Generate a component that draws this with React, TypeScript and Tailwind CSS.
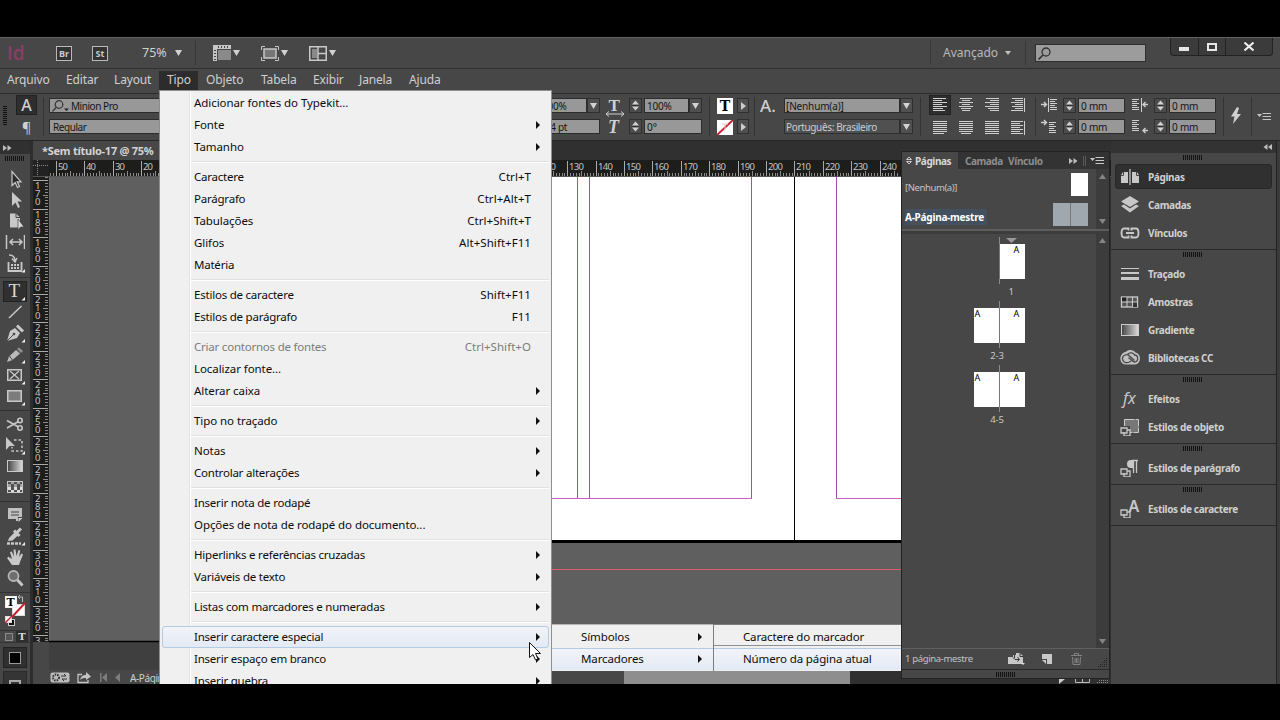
import React from 'react';

type MenuEntry = { label: string; shortcut?: string; sub?: boolean; disabled?: boolean; active?: boolean; tight?: boolean } | null;

const menuBar = [
  { label: 'Arquivo', cell: 'w-[58px]' },
  { label: 'Editar', cell: 'w-[48px]' },
  { label: 'Layout', cell: 'w-[53px]' },
  { label: 'Tipo', cell: 'w-[39px]' },
  { label: 'Objeto', cell: 'w-[55px]' },
  { label: 'Tabela', cell: 'w-[52px]' },
  { label: 'Exibir', cell: 'w-[46px]' },
  { label: 'Janela', cell: 'w-[50px]' },
  { label: 'Ajuda', cell: 'w-[50px]' },
];

// null = separator
const typeMenu: MenuEntry[] = [
  { label: 'Adicionar fontes do Typekit...' },
  { label: 'Fonte', sub: true },
  { label: 'Tamanho', sub: true },
  null,
  { label: 'Caractere', shortcut: 'Ctrl+T', tight: true },
  { label: 'Parágrafo', shortcut: 'Ctrl+Alt+T', tight: true },
  { label: 'Tabulações', shortcut: 'Ctrl+Shift+T' },
  { label: 'Glifos', shortcut: 'Alt+Shift+F11' },
  { label: 'Matéria', tight: true },
  null,
  { label: 'Estilos de caractere', shortcut: 'Shift+F11', tight: true },
  { label: 'Estilos de parágrafo', shortcut: 'F11', tight: true },
  null,
  { label: 'Criar contornos de fontes', shortcut: 'Ctrl+Shift+O', disabled: true, tight: true },
  { label: 'Localizar fonte...' },
  { label: 'Alterar caixa', sub: true },
  null,
  { label: 'Tipo no traçado', sub: true },
  null,
  { label: 'Notas', sub: true },
  { label: 'Controlar alterações', sub: true, tight: true },
  null,
  { label: 'Inserir nota de rodapé', tight: true },
  { label: 'Opções de nota de rodapé do documento...' },
  null,
  { label: 'Hiperlinks e referências cruzadas', sub: true, tight: true },
  { label: 'Variáveis de texto', sub: true, tight: true },
  null,
  { label: 'Listas com marcadores e numeradas', sub: true, tight: true },
  null,
  { label: 'Inserir caractere especial', sub: true, active: true, tight: true },
  { label: 'Inserir espaço em branco', sub: true, tight: true },
  { label: 'Inserir quebra', sub: true, tight: true },
];

const MM = 2.84;

function Down({ className = '' }: { className?: string }) {
  return (
    <svg width="7" height="6" className={className}>
      <path d="M0 0h7L3.500 6z" fill="#d2d2d2" />
    </svg>
  );
}

function Grip() {
  return (
    <svg width="20" height="5">
      {Array.from({ length: 10 }, (_, i) => (
        <rect key={i} x={i * 2} width="1" height="5" fill="#111" />
      ))}
    </svg>
  );
}

function Chevrons({ left = false }: { left?: boolean }) {
  return (
    <svg width="9" height="6" className={left ? 'rotate-180' : ''}>
      <path d="M0 0l4 3-4 3zM4.500 0l4 3-4 3z" fill="#bdbdbd" />
    </svg>
  );
}

function PanelMenu() {
  return (
    <svg width="14" height="9" className="shrink-0">
      <path d="M0 2h5L2.500 5z" fill="#c8c8c8" />
      <path d="M5.500 1.500H14M5.500 4.500H14M5.500 7.500H14" stroke="#c8c8c8" />
    </svg>
  );
}

function TitleBar() {
  return (
    <div className="flex h-[32px] items-center border-t border-b border-t-[#626262] border-b-[#303030] bg-[#474747]">
      <span className="w-[56px] pl-[7px] font-['Open_Sans',sans-serif] text-[19px] leading-none font-semibold text-[#8c3c66]">Id</span>
      {['Br', 'St'].map((t) => (
        <span key={t} className="mr-[20px] flex h-[15px] w-[16px] items-center justify-center border border-[#b9b9b9] bg-[#333] text-[9px] leading-none font-bold text-[#c9c9c9]">
          {t}
        </span>
      ))}
      <span className="ml-[14px] w-[33px] text-[12.500px] text-[#cfcfcf]">75%</span>
      <Down />
      <span className="mr-[17px] ml-[13px] h-[24px] w-px bg-[#373737]" />
      <svg width="18" height="16">
        <rect x="5" y="5" width="13" height="10" fill="#8a8a8a" />
        <rect width="18" height="4" fill="#c6c6c6" />
        <rect width="4" height="16" fill="#c6c6c6" />
        <path d="M5.500 1v2M8.500 1v2M11.500 1v2M14.500 1v2M1 5.500h2M1 8.500h2M1 11.500h2M1 14.500h2" stroke="#444" />
      </svg>
      <Down className="mr-[21px] ml-[2px]" />
      <svg width="18" height="15" fill="none" stroke="#c6c6c6">
        <rect x="3" y="3" width="12" height="9" fill="#777" strokeWidth="1.500" />
        <path d="M.5 4V.5H4M14 .5h3.500V4M17.500 11v3.500H14M4 14.500H.5V11" />
      </svg>
      <Down className="mr-[21px] ml-[2px]" />
      <svg width="18" height="15" stroke="#c9c9c9" strokeWidth="1.500">
        <rect x=".75" y=".75" width="16.500" height="13.500" fill="none" />
        <rect x="3" y="3" width="5" height="9" fill="#888" stroke="none" />
        <path d="M9 1v13M9 7.500h8" />
      </svg>
      <Down className="ml-[2px]" />
      <div className="ml-auto flex items-center self-stretch">
        <span className="mr-[12px] h-[24px] w-px bg-[#373737]" />
        <span className="w-[62px] text-[12px] text-[#b9b9b9]">Avançado</span>
        <svg width="6" height="4"><path d="M0 0h6L3 4z" fill="#c2c2c2" /></svg>
        <span className="mr-[9px] ml-[14px] h-[24px] w-px bg-[#373737]" />
        <div className="flex h-[18px] w-[111px] items-center border border-[#2f2f2f] bg-[#9c9c9c] pl-[2px]">
          <svg width="13" height="13" fill="none" stroke="#333" strokeWidth="1.300">
            <circle cx="8" cy="5" r="4" />
            <path d="M5 8L.5 12.500" strokeWidth="1.600" />
          </svg>
        </div>
        <div className="ml-[24px] mr-[7px] flex h-[18px] self-start rounded-b-[4px] border border-t-0 border-[#222] bg-[#3b3b3b]">
          <div className="w-[28px] border-r border-[#222] pt-[9px] pl-[8px]"><div className="h-[4px] w-[10px] bg-[#e6e6e6]" /></div>
          <div className="w-[27px] border-r border-[#222] pt-[5px] pl-[8px]"><div className="h-[8px] w-[10px] border-2 border-[#e6e6e6]" /></div>
          <div className="flex w-[46px] items-center justify-center">
            <svg width="10" height="9" stroke="#eee" strokeWidth="2"><path d="M.5.5l9 8M9.500.5l-9 8" /></svg>
          </div>
        </div>
      </div>
    </div>
  );
}

function Field({ value, className }: { value: string; className: string }) {
  return (
    <div className={`flex h-[15px] items-center overflow-hidden border border-[#2c2c2c] bg-[#989898] text-[10px] leading-none whitespace-nowrap text-[#151515] ${className}`}>
      {value}
    </div>
  );
}

function DropButton() {
  return (
    <div className="flex h-[15px] w-[13px] items-center justify-center border border-[#2f2f2f] bg-[#505050]">
      <Down />
    </div>
  );
}

function PlayButton() {
  return (
    <div className="flex h-[15px] w-[12px] items-center justify-center border border-[#2f2f2f] bg-[#505050]">
      <svg width="5" height="8"><path d="M0 0l5 4-5 4z" fill="#ccc" /></svg>
    </div>
  );
}

function Spinner() {
  return (
    <div className="flex h-[15px] w-[13px] items-center justify-center border border-[#2f2f2f] bg-[#4c4c4c]">
      <svg width="7" height="11">
        <path d="M0 4.500h7L3.500.5zM0 6.500h7l-3.500 4z" fill="#d2d2d2" />
        <path d="M-2 5.500h11" stroke="#2f2f2f" />
      </svg>
    </div>
  );
}

function Rule({ className }: { className: string }) {
  return <div className={`h-[39px] w-px shrink-0 bg-[#343434] ${className}`} />;
}

function Stack({ className = '', children }: { className?: string; children: React.ReactNode }) {
  return <div className={`flex shrink-0 flex-col gap-[6px] ${className}`}>{children}</div>;
}

// each entry: [start, end] of the seven lines
const alignments: [number, number][][] = [
  [[0, 13], [0, 9], [0, 14], [0, 9], [0, 14], [0, 10], [0, 12]],
  [[1, 13], [3, 11], [0, 14], [3, 11], [0, 14], [2, 12], [3, 11]],
  [[1, 14], [5, 14], [0, 14], [5, 14], [0, 14], [3, 14], [5, 14]],
  [[1, 12], [4, 12], [0, 12], [4, 12], [1, 12], [4, 12], [0, 12]],
  [[0, 14], [0, 14], [0, 14], [0, 14], [0, 14], [0, 14], [0, 11]],
  [[0, 14], [0, 14], [0, 14], [0, 14], [0, 14], [0, 14], [2, 12]],
  [[0, 14], [0, 14], [0, 14], [0, 14], [0, 14], [0, 14], [0, 14]],
  [[0, 12], [0, 9], [0, 12], [0, 9], [0, 12], [0, 9], [0, 12]],
];

function AlignIcon({ index }: { index: number }) {
  return (
    <div className={`flex h-[20px] w-[22px] items-center justify-center ${index === 0 ? 'border border-[#222] bg-[#2e2e2e]' : ''}`}>
      <svg width="15" height="14" stroke="#cfcfcf">
        {alignments[index].map(([a, b], i) => (
          <path key={i} d={`M${a} ${i * 2 + 0.5}H${b}`} />
        ))}
        {index % 4 === 3 && <path d="M13.500 0v14" />}
      </svg>
    </div>
  );
}

function IndentIcon({ kind }: { kind: number }) {
  const right = kind % 2 === 1;
  const low = kind > 1;
  return (
    <svg width="17" height="15" stroke="#cfcfcf" fill="none">
      {right ? (
        <>
          <path d="M0 1.500h7M0 3.500h5M0 5.500h7M0 7.500h5M0 9.500h7M0 11.500h7" />
          {!low && <path d="M9.500 0v14" />}
          <path strokeWidth="1.400" d={low ? 'M11 11.500h5M13.500 9l-2.500 2.500 2.500 2.500' : 'M11 6.500h5M13.500 4l-2.500 2.500 2.500 2.500'} />
        </>
      ) : (
        <>
          <path strokeWidth="1.400" d={low ? 'M0 3.500h5M3 1l2.500 2.500L3 6' : 'M0 6.500h5M3 4l2.500 2.500L3 9'} />
          {!low && <path d="M7.500 0v14" />}
          <path d="M9 1.500h7M9 3.500h5M9 5.500h7M9 7.500h5M9 9.500h7M9 11.500h7" transform={low ? 'translate(-1 2)' : undefined} />
        </>
      )}
    </svg>
  );
}

function ControlBar() {
  return (
    <div className="flex h-[47px] items-center overflow-hidden border-b border-[#262626] bg-[#474747] pb-[2px]">
      <svg width="16" height="20" className="shrink-0">
        {Array.from({ length: 10 }, (_, i) => (
          <rect key={i} x="3" y={i * 2} width="4" height="1" fill="#111" />
        ))}
      </svg>
      <div className="flex w-[21px] shrink-0 flex-col items-center gap-[4px] text-[#d0d0d0]">
        <span className="flex h-[20px] w-[21px] items-center justify-center border border-[#222] bg-[#2e2e2e] text-[16px] leading-none font-medium">A</span>
        <span className="h-[18px] text-[14px] leading-[18px]">¶</span>
      </div>
      <Rule className="ml-[6px] mr-[5px]" />
      <Stack className="w-[400px]">
        <div className="flex h-[15px] items-center border border-[#2c2c2c] bg-[#989898] pl-[2px] text-[10px] leading-none text-[#151515]">
          <svg width="20" height="12" fill="none" stroke="#333" strokeWidth="1.200" className="-mr-px">
            <circle cx="7" cy="4.500" r="3.800" />
            <path d="M4 7.500L.5 11.500" />
            <path d="M12 8.500h5l-2.500 2.500z" fill="#222" stroke="none" />
          </svg>
          <span className="tracking-[-0.45px]">Minion Pro</span>
        </div>
        <Field value="Regular" className="w-full pl-[3px] tracking-[-0.45px]" />
      </Stack>
      <Stack className="ml-[87px] w-[64px]">
        <div className="flex">
          <Field value="100%" className="w-[51px] pl-[5px] tracking-[-0.2px]" />
          <DropButton />
        </div>
        <Field value="14,4 pt" className="w-full justify-start tracking-[-0.3px]" />
      </Stack>
      <svg width="18" height="39" className="ml-[6px] shrink-0 font-['Liberation_Serif',serif]" fill="#cfcfcf">
        <text x="2.500" y="14" fontSize="17" fontWeight="bold">T</text>
        <path d="M0 17h18M3 14.500l-3 2.500 3 2.500M15 14.500l3 2.500-3 2.500" fill="none" stroke="#cfcfcf" />
        <text x="2" y="36" fontSize="18" fontStyle="italic" fontWeight="bold">T</text>
      </svg>
      <Stack className="ml-[5px]"><Spinner /><Spinner /></Stack>
      <Stack className="ml-[2px] w-[58px]">
        <div className="flex">
          <Field value="100%" className="w-[45px] pl-[2px] tracking-[-0.2px]" />
          <DropButton />
        </div>
        <Field value="0°" className="w-full pl-[2px]" />
      </Stack>
      <Rule className="ml-[7px]" />
      <Stack className="ml-[7px]">
        <div className="flex h-[16px] w-[16px] items-center justify-center bg-white font-['DejaVu_Serif',serif] text-[14px] leading-none font-bold text-black">T</div>
        <svg width="16" height="15" className="bg-white">
          <path d="M0 15L16 0" stroke="#c8202c" strokeWidth="2" />
          <path d="M5 4h6M8 4v7" stroke="#e4c9c9" />
        </svg>
      </Stack>
      <Stack className="ml-[4px]"><PlayButton /><PlayButton /></Stack>
      <Rule className="ml-[5px]" />
      <span className="ml-[5px] w-[24px] shrink-0 self-start pt-[2px] text-[17px] leading-[20px] font-medium text-[#cfcfcf]">A.</span>
      <Stack className="w-[129px]">
        <div className="flex">
          <Field value="[Nenhum(a)]" className="w-[117px] pl-px tracking-[-0.15px]" />
          <DropButton />
        </div>
        <div className="flex">
          <div className="flex h-[15px] w-[117px] items-center border border-[#2f2f2f] bg-[#505050] pl-px text-[10px] leading-none tracking-[-0.35px] whitespace-nowrap text-[#cdcdcd]">Português: Brasileiro</div>
          <DropButton />
        </div>
      </Stack>
      <Rule className="ml-[7px]" />
      <div className="ml-[8px] grid shrink-0 grid-cols-4 gap-x-[4px] gap-y-[3px]">
        {alignments.map((_, i) => <AlignIcon key={i} index={i} />)}
      </div>
      <Rule className="ml-[6px]" />
      <Stack className="ml-[5px]"><IndentIcon kind={0} /><IndentIcon kind={2} /></Stack>
      <Stack className="ml-[5px]"><Spinner /><Spinner /></Stack>
      <Stack className="ml-[2px]"><Field value="0 mm" className="w-[47px] pl-[2px] tracking-[-0.2px]" /><Field value="0 mm" className="w-[47px] pl-[2px] tracking-[-0.2px]" /></Stack>
      <Stack className="ml-[7px]"><IndentIcon kind={1} /><IndentIcon kind={3} /></Stack>
      <Stack className="ml-[5px]"><Spinner /><Spinner /></Stack>
      <Stack className="ml-[2px]"><Field value="0 mm" className="w-[47px] pl-[2px] tracking-[-0.2px]" /><Field value="0 mm" className="w-[47px] pl-[2px] tracking-[-0.2px]" /></Stack>
      <Rule className="ml-[7px]" />
      <svg width="12" height="18" className="ml-[6px] shrink-0"><path d="M7 0L1 9.500h3.500L3 17l8-10H7L9 1z" fill="#cfcfcf" /></svg>
      <Rule className="ml-[9px] mr-[5px]" />
      <PanelMenu />
    </div>
  );
}

// tool glyphs, drawn in an 18x18 box
const tools: Record<string, React.ReactNode> = {
  select: <path d="M5 1.500v14l3.200-3 2.300 5 2-1-2.300-4.700H14z" fill="#2b2b2b" stroke="#c8c8c8" strokeWidth="1.200" />,
  direct: <path d="M5 1v14l3.500-3.500L11 17l2-1-2.500-5.500H15z" fill="#c8c8c8" />,
  page: <><path d="M3 1.500h6l4 4v10H3z" fill="#c8c8c8" /><path d="M9 1.500v4h4" stroke="#444" fill="none" /><path d="M11 7v11l2.500-3H17z" fill="#ddd" stroke="#444" strokeWidth=".7" /></>,
  gap: <path d="M-.500 2v14M17.500 2v14M3 9h12M6 6L3 9l3 3M12 6l3 3-3 3" stroke="#c8c8c8" strokeWidth="1.500" fill="none" />,
  collect: <><path d="M1.500 8v9h13V8" stroke="#c8c8c8" strokeWidth="1.800" fill="none" /><path d="M4 11h8M4 14h8" stroke="#c8c8c8" strokeWidth="2" strokeDasharray="2 1" /><path d="M2 1c4 0 6 2 6 6M5 4.500L8 8l2-4" stroke="#c8c8c8" strokeWidth="1.400" fill="none" /></>,
  type: <text x="1.500" y="15" fontSize="19" fontFamily="Liberation Serif, serif" fill="#d8d8d8">T</text>,
  line: <path d="M2 15L14.500 3" stroke="#c8c8c8" strokeWidth="1.500" />,
  pen: <><path d="M0 17l3-10 5-3 5 5-3 5z" fill="#c8c8c8" /><path d="M0 17l6.500-6.500" stroke="#444" /><circle cx="7" cy="10" r="1.300" fill="#444" /><path d="M10 1.500l6 6" stroke="#c8c8c8" strokeWidth="3" /></>,
  pencil: <><path d="M0 17l2-5.500L9 5l4 3.500-7.500 6.500z" fill="#bbb" /><path d="M10 4l2-1.500L16 6l-2 2z" fill="#8f8f8f" /><path d="M2.500 11l3 4" stroke="#444" /></>,
  frame: <><rect x=".75" y="3.750" width="13.500" height="10.500" fill="none" stroke="#c8c8c8" strokeWidth="1.500" /><path d="M3 5l9 8M12 5l-9 8" stroke="#c8c8c8" strokeWidth="1.300" /></>,
  rect: <rect x=".75" y="3.750" width="13.500" height="10.500" fill="#7c7c7c" stroke="#c8c8c8" strokeWidth="1.500" />,
  scissors: <g fill="none" stroke="#c8c8c8" strokeWidth="1.600"><circle cx="13" cy="5.500" r="2.200" /><circle cx="13" cy="13" r="2.200" /><path d="M0 5.500l11.500 6.500M0 13l11.500-6.500" /></g>,
  transform: <><path d="M-1 1v13l3.500-4H8z" fill="#c8c8c8" /><path d="M7 4h8v11H5v-4" fill="none" stroke="#c8c8c8" strokeWidth="1.500" strokeDasharray="2.500 2" /></>,
  gradient: <rect x=".5" y="3.500" width="15" height="11" fill="url(#toolGradient)" stroke="#c8c8c8" />,
  feather: (
    <>
      <rect x=".5" y="3.500" width="15" height="11" fill="#505050" stroke="#c8c8c8" />
      <path d="M1 6h3v-2h3v2h3v-2h3v2h2v3h-2v-3h-3v3h-3v-3h-3v3h-3z" fill="#a0a0a0" />
      <path d="M1 9h3v3H1zM7 9h3v3H7zM13 9h2v3h-2zM4 12h3v2H4zM10 12h3v2h-3z" fill="#ddd" />
    </>
  ),
  note: <><path d="M1 2h14v9h-4v4H9v-2H1z" fill="#c0c0c0" /><path d="M4 6h8M4 9h8" stroke="#444" strokeWidth="1.200" /><path d="M15.500 12l-4 4v-4z" fill="#ccc" /></>,
  eyedropper: <><path d="M2 11l6-6 3.500 3-6 5.500L1 14z" fill="#c8c8c8" /><path d="M7 3.500l5.500 5.500M10.500 5l3.500-3.500" stroke="#c8c8c8" strokeWidth="3" /><path d="M0 16.500h14" stroke="#c8c8c8" strokeWidth="2.500" strokeDasharray="3 1" /></>,
  hand: <path d="M5 17L0 10l1.500-1.200L5 11 3 4l1.700-.5L7 8.500 6.500 1.500h2L9.500 8l2-6 1.700.5L12 9l2.500-3.500 1.500 1L13 14l-1 3z" fill="#c8c8c8" />,
  zoom: <><circle cx="6.500" cy="7" r="5" fill="#6e6e6e" stroke="#b4b4b4" strokeWidth="1.800" /><path d="M10.500 11l5 5.500" stroke="#c8c8c8" strokeWidth="2.800" /></>,
};

const toolGroups = [
  ['select', 'direct', 'page', 'gap', 'collect'],
  ['type', 'line', 'pen', 'pencil', 'frame', 'rect'],
  ['scissors', 'transform', 'gradient', 'feather'],
  ['note', 'eyedropper', 'hand', 'zoom'],
];
const flyouts = ['collect', 'type', 'pen', 'pencil', 'frame', 'rect', 'transform', 'eyedropper'];

function Toolbar() {
  return (
    <div className="flex w-[33px] shrink-0 flex-col overflow-hidden border-r-[3px] border-[#2b2d2f] bg-[#474747]">
      <div className="flex h-[13px] shrink-0 items-center bg-[#303030] pl-[3px]"><Chevrons /></div>
      <div className="flex h-[12px] shrink-0 pt-[2px] pl-[5px]"><Grip /></div>
      {toolGroups.map((group, g) => (
        <div key={g} className="shrink-0 border-b border-[#333] py-[3px]">
          {group.map((name) => (
            <div key={name} className={`ml-[3px] flex h-[21px] w-[24px] items-center justify-center ${name === 'type' ? 'border border-[#222] bg-[#303030]' : ''}`}>
              <svg width="20" height="19" viewBox="-2 0 20 19" className="shrink-0">
                <defs>
                  <linearGradient id="toolGradient">
                    <stop offset="0" stopColor="#444" />
                    <stop offset="1" stopColor="#ddd" />
                  </linearGradient>
                </defs>
                {tools[name]}
                {flyouts.includes(name) && <path d="M18 15v3.500h-3.500z" fill="#eee" />}
              </svg>
            </div>
          ))}
        </div>
      ))}
      <svg width="30" height="37" className="shrink-0">
        <rect x="12.500" y="11.500" width="12" height="11" fill="#fff" stroke="#ddd" />
        <path d="M12 24L25 10" stroke="#c8202c" strokeWidth="2" />
        <rect x="5.500" y="3.500" width="11" height="11" fill="#fff" stroke="#eee" />
        <text x="6.500" y="13" fontSize="11" fontWeight="bold" fontFamily="DejaVu Serif, serif">T</text>
        <path d="M18 4h4.500v5M20 2l-2 2 2 2" stroke="#bcbcbc" fill="none" />
        <rect x="8.500" y="26.500" width="6" height="6" fill="#111" stroke="#ccc" />
        <rect x="5.500" y="23.500" width="6" height="6" fill="#fff" stroke="#ddd" />
        <path d="M5 30l7-7" stroke="#c8202c" strokeWidth="1.500" />
      </svg>
      <div className="flex h-[13px] shrink-0 items-center border-t border-b border-[#333]">
        <span className="ml-[5px] h-[8px] w-[8px] border border-[#8c8c8c] bg-[#555]" />
        <span className="ml-[3px] w-[12px] bg-[#2e2e2e] text-center font-['DejaVu_Serif',serif] text-[10px] leading-[11px] font-bold text-[#d8d8d8]">T</span>
      </div>
      <div className="mt-[4px] ml-[3px] flex h-[21px] w-[24px] shrink-0 items-center justify-center border border-[#222] bg-[#303030]">
        <span className="h-[12px] w-[12px] border border-[#999] bg-black" />
      </div>
      <div className="mt-[3px] ml-[3px] flex h-[21px] w-[24px] shrink-0 items-start justify-center border border-[#2a2a2a] bg-[#353535] pt-[8px]">
        <span className="h-[8px] w-[12px] border-2 border-[#aaa]" />
      </div>
    </div>
  );
}

function HorizontalRuler() {
  const marks = [];
  for (let v = -54; v <= 246; v++) {
    const x = 198 - 49 + v * MM;
    if (x < 0) continue;
    const h = v % 10 === 0 ? 15 : v % 5 === 0 ? 5 : 3;
    marks.push(<path key={v} d={`M${Math.round(x) + 0.5} ${16 - h}V16`} stroke={h === 15 ? '#aaa' : '#8c8c8c'} />);
    if (v % 10 === 0) {
      marks.push(
        <text key={`t${v}`} x={Math.round(x) + 2} y="9.500" fontSize="9.500" fill="#c4c4c4" textLength={Math.abs(v) >= 100 ? 15 : Math.abs(v) >= 10 ? 10 : 5}>
          {Math.abs(v)}
        </text>
      );
    }
  }
  return (
    <div className="flex h-[17px] shrink-0 border-b border-[#555] bg-[#1d1d1b]">
      <svg width="16" height="16" className="bg-[#222]" stroke="#888" strokeDasharray="1 1">
        <path d="M4.500 0v16M0 5.500h16" />
      </svg>
      <svg width="1060" height="16">{marks}</svg>
    </div>
  );
}

function VerticalRuler() {
  const marks = [];
  for (let v = 169; v <= 332; v++) {
    const y = 180.3 - 177 + (v - 170) * MM;
    const w = v % 10 === 0 ? 15 : v % 5 === 0 ? 5 : 3;
    const ty = Math.round(y);
    marks.push(<path key={v} d={`M${15 - w} ${ty + 0.5}H15`} stroke={w === 15 ? '#aaa' : '#8c8c8c'} />);
    if (v % 10 === 0) {
      String(v).split('').forEach((digit, i) => {
        marks.push(<text key={`${v}-${i}`} x="2" y={ty + 9 + i * 8} fontSize="9.500" fill="#c4c4c4">{digit}</text>);
      });
    }
  }
  return <svg width="16" height="465" className="shrink-0 bg-[#1d1d1b]">{marks}</svg>;
}

function Canvas() {
  return (
    <svg width="852" height="494" className="shrink-0 bg-[#5f5f5f]" fill="none">
      <rect x="149" y="0" width="703" height="363" fill="#fff" />
      <path d="M.5 0V464" stroke="#6c6c6c" />
      <rect x="149" y="363" width="703" height="3" fill="#000" />
      <path d="M745.500 0v363" stroke="#000" />
      <path d="M528.500 0v321M540.500 0v321M702.500 0v321M787.500 0v321" stroke="#a04fb5" />
      <path d="M149 321.500h554M787 321.500h65" stroke="#d05cbc" />
      <path d="M149 392.500h703" stroke="#d95f68" />
      <rect x="0" y="464" width="852" height="30" fill="#3f3f3f" />
      <path d="M0 464.500h852" stroke="#000" strokeWidth="1.500" />
    </svg>
  );
}

function StatusBar() {
  return (
    <div className="flex h-[14px] shrink-0 bg-[#303030]">
      <div className="flex w-[591px] items-center overflow-hidden bg-[#474747] pl-[17px] pt-px">
        <svg width="20" height="11">
          <rect x=".5" y=".5" width="19" height="10" rx="2" fill="#bcbcbc" />
          <circle cx="6" cy="5.500" r="3" fill="none" stroke="#333" strokeWidth="2" strokeDasharray="1.500 1" />
          <path d="M11 4h5l-2-2M17 7h-5l2 2" stroke="#333" fill="none" />
        </svg>
        <svg width="14" height="12" className="ml-[7px]">
          <path d="M5 2.500H1v8h10V8" fill="none" stroke="#c4c4c4" strokeWidth="1.300" />
          <path d="M3 8c1-4 3-5 6-5V0l5 4.500L9 8V6C6 6 4.500 6.500 3 8z" fill="#c4c4c4" />
        </svg>
        <svg width="20" height="9" className="ml-[9px]" fill="#7d7d7d">
          <path d="M0 0h1.500v9H0zM7 0v9L2 4.500zM20 0v9l-5-4.500z" />
        </svg>
        <span className="ml-[10px] text-[10px] leading-none tracking-[-0.4px] text-[#cfcfcf]">A-Página-mestre</span>
      </div>
      <div className="w-[226px] border-t border-[#555] bg-[#8e8e8e]" />
      <div className="ml-auto flex items-end pr-[3px]">
        <svg width="6" height="5"><path d="M0 0h6L0 5z" fill="#ccc" /></svg>
        <svg width="17" height="7" className="ml-[9px]" fill="none" stroke="#bbb"><path d="M1.500 0v5.500h14V0M8.500 0v5.500" /></svg>
        <svg width="11" height="7" className="ml-[6px]" stroke="#888" strokeDasharray="1 1"><path d="M4 1.500h7M2 3.500h9M0 5.500h11" /></svg>
      </div>
    </div>
  );
}

function ScrollArrow({ down = false }: { down?: boolean }) {
  return (
    <svg width="7" height="5" className={down ? 'rotate-180' : ''}><path d="M0 5h7L3.500 0z" fill="#858585" /></svg>
  );
}

function Spread({ label, single = false }: { label: string; single?: boolean }) {
  return (
    <div className="flex h-[64px] flex-col items-center">
      <div className="h-[7px] w-px bg-[#8c8c8c]" />
      <div className="flex h-[35px] text-[9px] leading-[11px] text-black">
        <div className={`w-[25px] pl-px ${single ? '' : 'bg-white'}`}>{single ? '' : 'A'}</div>
        <div className="w-px bg-[#777]" />
        <div className="w-[25px] bg-white pl-[14px]">A</div>
      </div>
      <div className="h-[5px] w-px bg-[#8c8c8c]" />
      <span className={`pt-px text-[9.500px] leading-[14px] tracking-[-0.2px] text-[#c8c8c8] ${single ? 'pl-[24px]' : 'pr-[4px]'}`}>{label}</span>
    </div>
  );
}

function PagesPanel() {
  return (
    <div className="absolute top-[10px] left-[868px] flex h-[528px] w-[209px] flex-col border border-[#232323] bg-[#474747]">
      <div className="flex h-[17px] shrink-0 items-center bg-[#333] text-[10px] leading-none font-bold text-[#8e8e8e]">
        <div className="flex h-full w-[56px] shrink-0 items-center bg-[#474747] pl-[4px] tracking-[-0.4px] text-[#d8d8d8]">
          <svg width="6" height="9" className="mr-[3px] shrink-0" fill="none" stroke="#ccc"><path d="M.5 3.500L3 1l2.500 2.500zM.5 5.500L3 8l2.500-2.500z" /></svg>
          Páginas
        </div>
        <div className="ml-[7px] w-[37px] shrink-0 border-r border-[#292929] tracking-[-0.45px] whitespace-nowrap">Camada</div>
        <div className="ml-[6px] w-[61px] shrink-0 tracking-[-0.3px]">Vínculo</div>
        <Chevrons />
        <span className="mr-[4px] ml-[5px] h-[10px] w-[3px] shrink-0 border-x border-[#5a5a5a]" />
        <PanelMenu />
      </div>
      <div className="flex h-[62px] shrink-0 border-b-2 border-[#5d5d5d]">
        <div className="flex flex-1 flex-col pr-[8px] pl-[3px] text-[10px] leading-none">
          <div className="flex h-[31px] items-center justify-between pt-[2px] text-[#c4c4c4]">
            <span className="pt-[4px] text-[9.500px] tracking-[-0.4px]">[Nenhum(a)]</span>
            <div className="mt-[-2px] h-[23px] w-[17px] bg-white" />
          </div>
          <div className="flex h-[29px] items-center justify-between font-bold text-white">
            <span className="mt-[4px] bg-[#43505f] py-[3px] pr-[3px] tracking-[-0.25px]">A-Página-mestre</span>
            <div className="flex h-[23px] w-[35px] bg-[#9fa7af]"><span className="mx-auto w-px bg-[#777]" /></div>
          </div>
        </div>
        <div className="flex w-[13px] flex-col items-center justify-between bg-[#3c3c3c] py-[5px]"><ScrollArrow /><ScrollArrow down /></div>
      </div>
      <div className="flex min-h-0 flex-1 border-t-[3px] border-[#3c3c3c]">
        <div className="relative flex-1 pt-[3px]">
          <svg width="11" height="5" className="absolute top-[4px] left-[104px]"><path d="M0 0h11L5.500 5z" fill="#999" /></svg>
          <Spread label="1" single />
          <Spread label="2-3" />
          <Spread label="4-5" />
        </div>
        <div className="flex w-[13px] flex-col items-center justify-between bg-[#3c3c3c] py-[4px]"><ScrollArrow /><ScrollArrow down /></div>
      </div>
      <div className="flex h-[21px] shrink-0 items-center border-t border-[#606060] pl-[3px] text-[9.500px] leading-none text-[#c4c4c4]">
        <span className="w-[103px] tracking-[-0.35px]">1 página-mestre</span>
        <svg width="17" height="12">
          <path d="M0 4h5V2h3V0h4l3 3v8H0z" fill="#c8c8c8" />
          <path d="M5 4.500l2 2h4M9.500 4l2 2.500-2 2M12 0v3.500h3M6.500 2v3" stroke="#333" fill="none" />
          <path d="M13 10h4l-2 2z" fill="#ddd" />
        </svg>
        <svg width="10" height="10" className="ml-[17px]"><path d="M0 0h10v10H5V5H0z" fill="#c8c8c8" /><path d="M0 6l4 4V6z" fill="#c8c8c8" /></svg>
        <svg width="11" height="12" className="ml-[19px]" fill="none" stroke="#838383"><path d="M0 2.500h11M3.500 2V.5h4V2M1.500 4l.5 7.500h7L9.500 4M4 5v5M5.500 5v5M7 5v5" /></svg>
        <svg width="11" height="11" className="ml-auto mr-px mt-[7px]" stroke="#222" strokeDasharray="1 1"><path d="M9 1.500h2M7 3.500h4M5 5.500h6M3 7.500h8M1 9.500h10" /></svg>
      </div>
      <div className="flex h-[9px] shrink-0 items-center justify-center border-t border-[#2a2a2a]"><Grip /></div>
    </div>
  );
}

const StyleBox = () => <path d="M4 14v4h6v-6H7M1 10h6v5H1z" fill="none" stroke="#c8c8c8" strokeWidth="1.300" />;

// dock glyphs, 20x18
const dockIcons: Record<string, React.ReactNode> = {
  'Páginas': <><path d="M1 7l2-3h5v11H1zM19 7l-2-3h-5v11h7z" fill="#c8c8c8" /><path d="M10 1v16" stroke="#eee" /><path d="M1 7.500h2.500V4M19 7.500h-2.500V4" stroke="#444" fill="none" /></>,
  'Camadas': <><path d="M10 0l9 5.500-9 5.500-9-5.500z" fill="#c8c8c8" /><path d="M1 10l3-1.500 6 4 6-4 3 1.500-9 6.500z" fill="#c8c8c8" /></>,
  'Vínculos': <path d="M8.500 6.500V4.500H4Q1.500 4.500 1.500 9t2.500 4.500h4.500v-2M11.500 6.500V4.500H16q2.500 0 2.500 4.500T16 13.500h-4.500v-2M6 9h8" fill="none" stroke="#c8c8c8" strokeWidth="1.900" />,
  'Traçado': <><path d="M1 3.500h18" stroke="#c8c8c8" /><path d="M1 8h18" stroke="#c8c8c8" strokeWidth="2" /><path d="M1 13.500h18" stroke="#c8c8c8" strokeWidth="3" /></>,
  'Amostras': <><rect x="1.500" y="4" width="16" height="10" fill="#555" stroke="#ccc" strokeWidth="1.300" /><rect x="2" y="4.500" width="5" height="4" fill="#222" /><rect x="12" y="9" width="5" height="5" fill="#333" /><path d="M7 4v10M12.500 4v10M1 9h17" stroke="#ccc" /></>,
  'Gradiente': <rect x="1.500" y="3.500" width="17" height="11" fill="url(#toolGradient)" stroke="#ccc" />,
  'Bibliotecas CC': (
    <>
      <path d="M6.500 2.500C9 0 14 1 15.500 3.500c6 1 6 11 0 12H6C-1.500 15.500-1.500 4 6.500 2.500z" fill="#c0c0c0" />
      <g fill="none" stroke="#474747" strokeWidth="1.300">
        <path d="M11 12l-1.500 1C5 15 2.500 12 2.500 9.500 2.500 6 7 4.500 9.500 7l5 4.500" />
        <path d="M7.500 5.500C10 2.500 14 4 14.500 6c4 0 4.500 7 0 7-2 0-4-3-6-4.500" />
      </g>
    </>
  ),
  'Efeitos': <text x="3" y="14" fontSize="16" fontStyle="italic" fill="#c8c8c8">fx</text>,
  'Estilos de objeto': <><rect x="4.500" y="1.500" width="14" height="13" fill="#777" stroke="#ccc" strokeDasharray="10 1" /><rect x="0" y="8" width="10" height="10" fill="#474747" /><StyleBox /></>,
  'Estilos de parágrafo': <><path d="M12 1.500h6M13.500 1v13M16.500 1v13" stroke="#c8c8c8" strokeWidth="1.300" fill="none" /><path d="M14 1h-3a4 4 0 0 0 0 8h3z" fill="#c8c8c8" /><StyleBox /></>,
  'Estilos de caractere': <><text x="8.500" y="12" fontSize="16" fill="#c8c8c8" fontWeight="600">A</text><StyleBox /></>,
};

const dockGroups = [
  ['Páginas', 'Camadas', 'Vínculos'],
  ['Traçado', 'Amostras', 'Gradiente', 'Bibliotecas CC'],
  ['Efeitos', 'Estilos de objeto'],
  ['Estilos de parágrafo'],
  ['Estilos de caractere'],
];

function Dock() {
  return (
    <div className="flex w-[165px] shrink-0 flex-col bg-[#474747]">
      <div className="flex h-[12px] items-center justify-end bg-[#333] pr-[4px]"><Chevrons left /></div>
      {dockGroups.map((group, g) => (
        <div key={g} className="border-b border-[#2a2a2a] px-[4px] pb-[3px]">
          <div className="flex h-[9px] items-end justify-center pr-[2px] pb-[2px]"><Grip /></div>
          {group.map((name) => (
            <div key={name} className="flex h-[28px] items-center">
              <div className={`flex h-[25px] w-full items-center rounded-[3px] border pt-[2px] pl-[4px] ${name === 'Páginas' ? 'border-[#272727] bg-[#303030]' : 'border-transparent'}`}>
                <svg width="21" height="18" className="mr-[7px]">{dockIcons[name]}</svg>
                <span className="text-[10px] font-bold tracking-[-0.35px] whitespace-nowrap text-[#d0d0d0]">{name}</span>
              </div>
            </div>
          ))}
        </div>
      ))}
    </div>
  );
}

function SubArrow() {
  return (
    <svg width="4" height="8"><path d="M0 0l4 4-4 4z" fill="#111" /></svg>
  );
}

function TypeMenu() {
  return (
    <div className="absolute top-[53px] left-[159px] h-[594px] w-[393px] overflow-hidden border border-b-0 border-[#8e8e8e] bg-[#f0f0f0] pt-px text-[11.500px] text-[#0c0c0c]">
      <div className="min-h-full bg-[linear-gradient(to_right,transparent_29px,#e2e3e3_29px,#e2e3e3_30px,#fff_30px,#fff_31px,transparent_31px)]">
        {typeMenu.map((item, i) =>
          item === null ? (
            <div key={i} className="flex h-[8px] items-center pr-[2px] pl-[31px]">
              <div className="h-[2px] w-full border-t border-[#e0e0e0] bg-white" />
            </div>
          ) : (
            <div
              key={i}
              className={`mx-[2px] flex h-[22px] items-center justify-between rounded-[3px] border pr-[8px] pl-[31px] leading-none whitespace-nowrap ${
                item.active ? 'border-[#b4cbe4] bg-linear-to-b from-[#f1f3f8] to-[#e3eaf5]' : 'border-transparent'
              } ${item.disabled ? 'text-[#7b7b7b]' : ''}`}
            >
              <span className={item.tight ? 'tracking-[-0.22px]' : 'tracking-[-0.07px]'}>{item.label}</span>
              {item.sub && <SubArrow />}
              {item.shortcut && <span className="pr-[9px] tracking-[0.05px]">{item.shortcut}</span>}
            </div>
          )
        )}
      </div>
    </div>
  );
}

function SubMenus() {
  return (
    <div className="absolute top-[587px] left-[552px] flex h-[47px] w-[349px] bg-[#f0f0f0] text-[11.500px] leading-none tracking-[-0.12px] whitespace-nowrap text-[#0c0c0c]">
      <div className="w-[161px] border-t border-[#b5b5b5] pt-px">
        <div className="flex h-[22px] items-center pl-[29px]"><span className="w-[117px]">Símbolos</span><SubArrow /></div>
        <div className="flex h-[22px] items-center border-t border-[#b4cbe4] bg-linear-to-b from-[#f1f3f8] to-[#e3eaf5] pb-[2px] pl-[29px]"><span className="w-[117px]">Marcadores</span><SubArrow /></div>
      </div>
      <div className="w-[188px] border-t border-l border-[#7d7d7d] pt-px">
        <div className="flex h-[20px] items-center border-b border-[#8b8f96] pt-[2px] pl-[29px] tracking-[0px]">
          <span className="-tracking-[0.15px]">Caractere do marcador</span>
        </div>
        <div className="mt-[2px] flex h-[22px] items-center border-t border-[#b4cbe4] bg-linear-to-b from-[#f1f3f8] to-[#e3eaf5] pb-[2px] pl-[29px]">Número da página atual</div>
      </div>
    </div>
  );
}

export default function App() {
  return (
    <div className="flex h-[720px] w-[1280px] flex-col overflow-hidden bg-black pt-[37px] font-['Noto_Sans','Open_Sans',sans-serif]">
      <div className="relative flex h-[647px] flex-col overflow-hidden bg-[#474747]">
        <TitleBar />
        <div className="flex h-[25px] shrink-0 items-center border-b border-[#2c2c2c] text-[12px] tracking-[-0.15px] text-[#cfcfcf]">
          {menuBar.map(({ label, cell }, i) => (
            <div key={label} className={`flex h-[20px] items-center pb-[2px] ${cell} ${i === 0 ? 'pl-[7px]' : 'pl-[8px]'} ${label === 'Tipo' ? 'bg-[#2c2c2c]' : ''}`}>
              {label}
            </div>
          ))}
        </div>
        <ControlBar />
        <div className="flex min-h-0 flex-1">
          <Toolbar />
          <div className="relative flex w-[1078px] shrink-0 flex-col overflow-hidden bg-[#303030]">
            <div className="flex h-[19px] shrink-0">
              <div className="flex w-[180px] items-center bg-[#474747] pt-[2px] pl-[9px] text-[11px] font-bold tracking-[-0.25px] whitespace-nowrap text-[#d4d4d4]">*Sem título-17 @ 75%</div>
            </div>
            <HorizontalRuler />
            <div className="flex min-h-0 flex-1 overflow-hidden">
              <div className="w-[16px] bg-[#474747]"><VerticalRuler /></div>
              <Canvas />
            </div>
            <StatusBar />
            <PagesPanel />
          </div>
          <Dock />
          <div className="flex-1 border-l border-[#222] bg-[#3b3b3b]" />
        </div>
        <TypeMenu />
        <SubMenus />
        <svg width="13" height="19" className="absolute top-[605px] left-[529px]">
          <path d="M.5.5v15l3.500-3 2.500 5.500 2.500-1-2.500-5.500h5z" fill="#fff" stroke="#111" />
        </svg>
      </div>
    </div>
  );
}
